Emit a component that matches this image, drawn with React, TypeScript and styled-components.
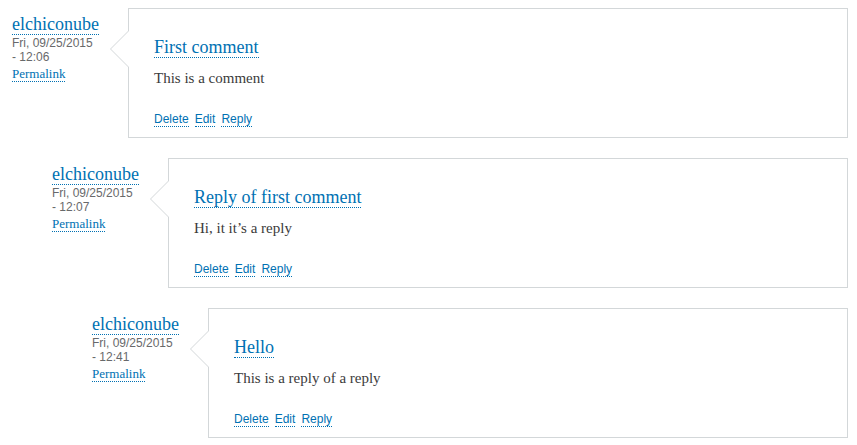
import React, { ReactElement } from 'react';
import styled, { createGlobalStyle } from 'styled-components';

interface CommentModel {
  id: number;
  author: string;
  date: string;
  time: string;
  title: string;
  body: string;
  depth: number;
}

const comments: CommentModel[] = [
  { id: 1, author: 'elchiconube', date: 'Fri, 09/25/2015', time: '- 12:06', title: 'First comment', body: 'This is a comment', depth: 0 },
  { id: 2, author: 'elchiconube', date: 'Fri, 09/25/2015', time: '- 12:07', title: 'Reply of first comment', body: 'Hi, it it\u2019s a reply', depth: 1 },
  { id: 3, author: 'elchiconube', date: 'Fri, 09/25/2015', time: '- 12:41', title: 'Hello', body: 'This is a reply of a reply', depth: 2 },
];

const links = ['Delete', 'Edit', 'Reply'];

function CommentItem({ comment }: { comment: CommentModel }): ReactElement {
  return (
    <CommentRow depth={ comment.depth }>
      <Meta>
        <Author><DottedLink href="#">{ comment.author }</DottedLink></Author>
        <Submitted>
          { comment.date }<br />{ comment.time }
        </Submitted>
        <Permalink><DottedLink href="#">Permalink</DottedLink></Permalink>
      </Meta>

      <Content>
        <Title><DottedLink href="#">{ comment.title }</DottedLink></Title>
        <Body>{ comment.body }</Body>
        <Links>
          { links.map((link) => (
            <ActionLink key={ link } href="#">{ link }</ActionLink>
          )) }
        </Links>
      </Content>
    </CommentRow>
  );
}

export default function App(): ReactElement {
  return (
    <>
      <GlobalStyle />
      <Page>
        { comments.map((comment) => (
          <CommentItem key={ comment.id } comment={ comment } />
        )) }
      </Page>
    </>
  );
}

const GlobalStyle = createGlobalStyle`
  html, body {
    margin: 0;
    padding: 0;
    background: #fff;
  }

  body {
    font-family: "Liberation Serif", Georgia, serif;
    color: #3b3b3b;
  }
`;

const Page = styled.div`
  display: flex;
  flex-direction: column;
  gap: 20px;
  padding: 8px 9px 0 12px;
`;

const CommentRow = styled.div<{ depth: number }>`
  display: flex;
  align-items: flex-start;
  margin-left: ${ (p) => p.depth * 40 }px;
`;

const DottedLink = styled.a`
  color: #0071b3;
  text-decoration: none;
  border-bottom: 1px dotted #0071b3;
`;

const Meta = styled.div`
  width: 116px;
  flex-shrink: 0;
  padding-top: 5px;
`;

const Author = styled.div`
  font-size: 18px;
  line-height: 22px;
`;

const Submitted = styled.div`
  font-family: "Liberation Sans", Arial, sans-serif;
  font-size: 12px;
  line-height: 14px;
  color: #68696b;
  margin-top: 1px;
`;

const Permalink = styled.div`
  font-size: 13px;
  line-height: 16px;
  margin-top: 2px;
`;

const Content = styled.div`
  position: relative;
  flex: 1;
  border: 1px solid #d3d7d9;
  padding: 27px 25px 10px;

  &::before,
  &::after {
    content: '';
    position: absolute;
    right: 100%;
    top: 21px;
    border-top: 19px solid transparent;
    border-bottom: 19px solid transparent;
    border-right: 19px solid #d3d7d9;
  }

  &::after {
    margin-right: -1px;
    border-right-color: #fff;
  }
`;

const Title = styled.h3`
  margin: 0 0 10px;
  font-size: 18px;
  line-height: 22px;
  font-weight: normal;
`;

const Body = styled.p`
  margin: 0 0 23px;
  font-size: 15px;
  line-height: 20px;
`;

const Links = styled.div`
  font-family: "Liberation Sans", Arial, sans-serif;
  font-size: 12px;
  line-height: 16px;
`;

const ActionLink = styled(DottedLink)`
  margin-right: 6px;
`;
